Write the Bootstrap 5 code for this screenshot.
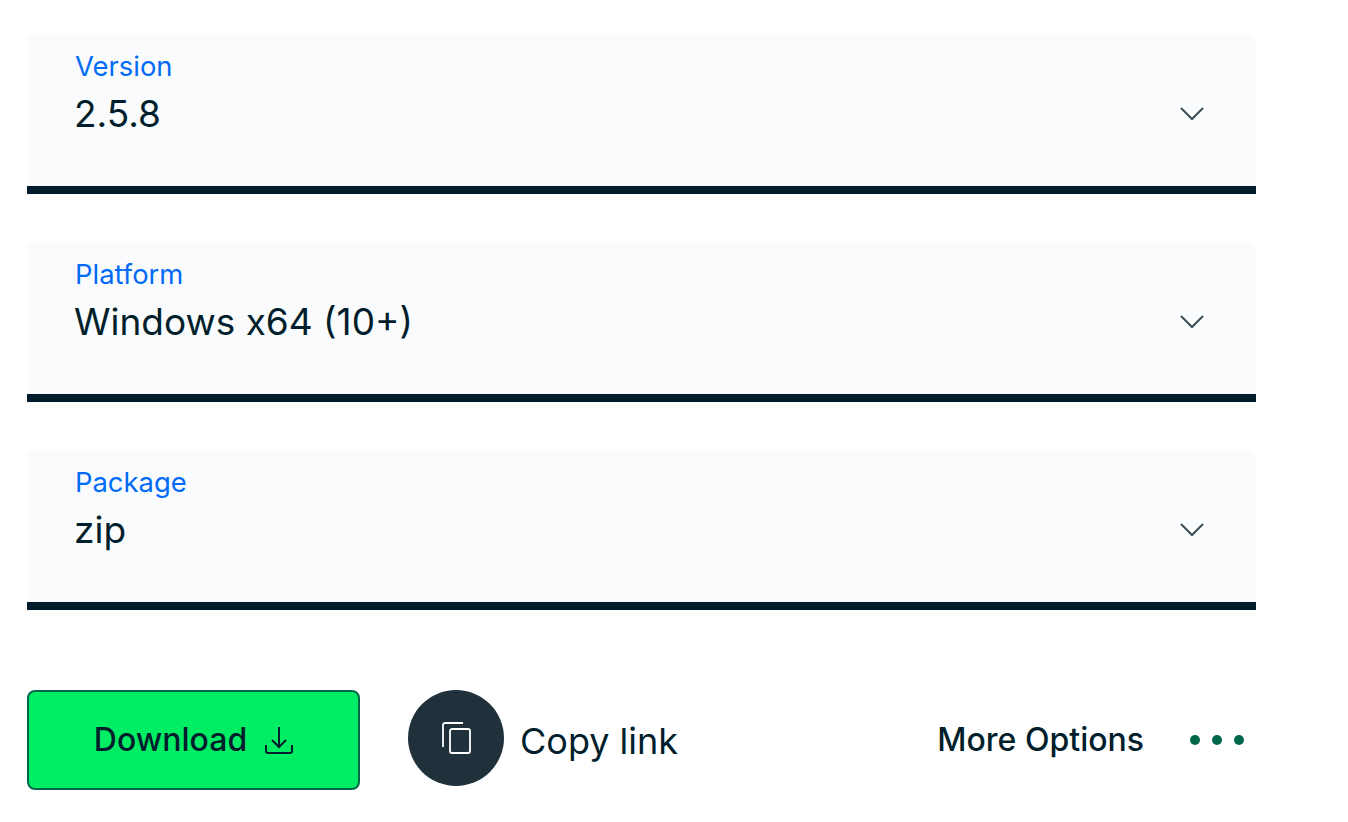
<!DOCTYPE html>
<html lang="en">
<head>
    <meta charset="UTF-8">
    <title>Download</title>
    <link rel="stylesheet" href="https://cdn.jsdelivr.net/npm/bootstrap@5.3.0/dist/css/bootstrap.min.css">
    <style>
        body {
            font-family: "Inter", "Liberation Sans", sans-serif;
            color: #001e2b;
            background: #fff;
        }
        .dl-wrap {
            width: 1229px;
            margin-left: 27px;
            padding-top: 34px;
        }
        .dl-select {
            height: 160px;
            margin-bottom: 48px;
            padding: 16px 48px 0;
            background: #f9fbfd;
            border-bottom: 8px solid #001e2b;
            border-radius: 8px 8px 0 0;
        }
        .dl-label {
            font-size: 27.4px;
            line-height: 32px;
            color: #016bf8;
        }
        .dl-value {
            font-size: 37px;
            line-height: 48px;
            margin-top: 8px;
            margin-left: -1px;
        }
        .dl-chevron {
            width: 26px;
            height: 16px;
            margin-top: 56px;
            margin-right: 3px;
        }
        .dl-actions {
            margin-top: 80px;
        }
        .dl-btn {
            width: 333px;
            height: 100px;
            background: #00ed64;
            border: 2px solid #00684a;
            border-radius: 8px;
            color: #001e2b;
            font-size: 32px;
            font-weight: 500;
            gap: 18px;
        }
        .dl-btn:hover {
            background: #00ed64;
            border-color: #00684a;
            color: #001e2b;
        }
        .dl-circle {
            width: 96px;
            height: 96px;
            background: #21313c;
        }
        .dl-copy {
            margin-left: 48px;
            gap: 16px;
            font-size: 36px;
        }
        .dl-copy-text {
            padding-top: 5px;
        }
        .dl-more {
            height: 100px;
            font-size: 32px;
            font-weight: 500;
            gap: 46px;
            margin-right: 12px;
        }
        .dl-dots {
            gap: 12px;
        }
        .dl-dot {
            width: 10px;
            height: 10px;
            background: #00684a;
        }
    </style>
</head>
<body>
    <div class="dl-wrap">
        <div class="dl-select d-flex justify-content-between">
            <div>
                <div class="dl-label">Version</div>
                <div class="dl-value">2.5.8</div>
            </div>
            <svg class="dl-chevron" viewBox="0 0 26 16" fill="none" stroke="#3d4f58" stroke-width="2"><path d="M2 2l11 11L24 2"/></svg>
        </div>
        <div class="dl-select d-flex justify-content-between">
            <div>
                <div class="dl-label">Platform</div>
                <div class="dl-value">Windows x64 (10+)</div>
            </div>
            <svg class="dl-chevron" viewBox="0 0 26 16" fill="none" stroke="#3d4f58" stroke-width="2"><path d="M2 2l11 11L24 2"/></svg>
        </div>
        <div class="dl-select d-flex justify-content-between">
            <div>
                <div class="dl-label">Package</div>
                <div class="dl-value">zip</div>
            </div>
            <svg class="dl-chevron" viewBox="0 0 26 16" fill="none" stroke="#3d4f58" stroke-width="2"><path d="M2 2l11 11L24 2"/></svg>
        </div>
        <div class="dl-actions d-flex align-items-start">
            <button class="btn dl-btn d-flex align-items-center justify-content-center p-0">
                Download
                <svg width="28" height="28" viewBox="0 0 28 28" fill="none" stroke="#001e2b" stroke-width="2"><path d="M14 1v20M7 14l7 7 7-7M1 19v6a2 2 0 0 0 2 2h22a2 2 0 0 0 2-2v-6"/></svg>
            </button>
            <div class="dl-copy d-flex align-items-center">
                <span class="dl-circle rounded-circle d-flex align-items-center justify-content-center">
                    <svg width="30" height="32" viewBox="0 0 30 32" fill="none" stroke="#fff" stroke-width="1.8"><rect x="9" y="7" width="20" height="24" rx="2"/><path d="M2 25V3a2 2 0 0 1 2-2h18"/></svg>
                </span>
                <span class="dl-copy-text">Copy link</span>
            </div>
            <div class="dl-more d-flex align-items-center ms-auto">
                <span>More Options</span>
                <span class="dl-dots d-flex">
                    <span class="dl-dot rounded-circle"></span>
                    <span class="dl-dot rounded-circle"></span>
                    <span class="dl-dot rounded-circle"></span>
                </span>
            </div>
        </div>
    </div>
</body>
</html>
